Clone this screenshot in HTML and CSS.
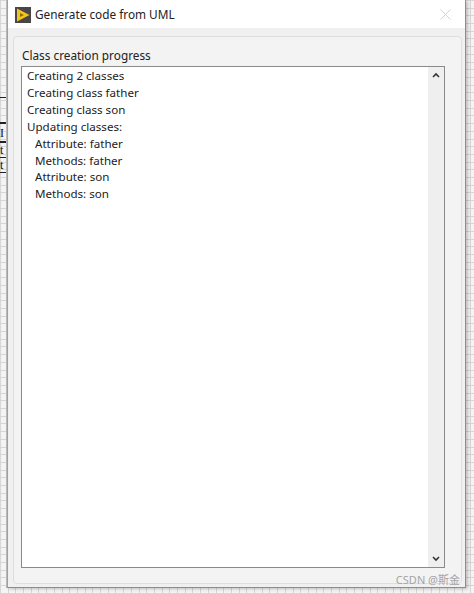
FILE: index.html
```html
<!DOCTYPE html>
<html lang="en">
<head>
<meta charset="utf-8">
<title>Generate code from UML</title>
<link rel="stylesheet" href="styles.css">
</head>
<body>
<div class="canvas">
  <div class="behind">
    <div class="behind-rule"></div>
    <div class="behind-rule thick"></div>
    <div class="behind-text tall">I</div>
    <div class="behind-rule thick"></div>
    <div class="behind-text underlined">t</div>
    <div class="behind-text underlined">t</div>
  </div>
  <main class="window">
    <header class="titlebar">
      <svg class="app-icon" viewBox="0 0 16 16" width="16" height="16" aria-hidden="true">
        <rect width="16" height="16" fill="#4a4648"/>
        <path d="M2 1.5 L14.5 8 L2 14.5 Z" fill="#f5c518"/>
        <path d="M5 6 L9 8 L5 10 Z" fill="#8a6d10"/>
      </svg>
      <span class="title">Generate code from UML</span>
      <svg class="close" viewBox="0 0 11 11" width="11" height="11" aria-hidden="true">
        <path d="M.5.5l10 10M10.5.5l-10 10" stroke="#d2d2d2" stroke-width="1" fill="none"/>
      </svg>
    </header>
    <section class="panel">
      <div class="group">
        <div class="label">Class creation progress</div>
        <div class="listbox">
          <div class="log">
            <div>Creating 2 classes</div>
            <div>Creating class father</div>
            <div>Creating class son</div>
            <div>Updating classes:</div>
            <div class="sub">Attribute: father</div>
            <div class="sub">Methods: father</div>
            <div class="sub">Attribute: son</div>
            <div class="sub">Methods: son</div>
          </div>
          <div class="scrollbar">
            <svg viewBox="0 0 8 6" width="8" height="6" aria-hidden="true"><path d="M1 5l3-3 3 3" stroke="#333" stroke-width="1.6" fill="none"/></svg>
            <svg viewBox="0 0 8 6" width="8" height="6" aria-hidden="true"><path d="M1 1l3 3 3-3" stroke="#333" stroke-width="1.6" fill="none"/></svg>
          </div>
        </div>
      </div>
    </section>
  </main>
  <div class="watermark">CSDN @斯金</div>
</div>
</body>
</html>
```
FILE: styles.css
```css
html, body { margin: 0; padding: 0; }
body { width: 474px; height: 594px; overflow: hidden; font-family: "Noto Sans", "Noto Sans CJK SC", sans-serif; }
.canvas {
  position: relative; width: 474px; height: 594px; box-sizing: border-box; padding-left: 7px;
  background-color: #f4f4f4;
  background-image:
    repeating-linear-gradient(to right, #d6d6d6 0 1px, transparent 1px 7.7px),
    repeating-linear-gradient(to bottom, #d6d6d6 0 1px, transparent 1px 7.7px);
}
.behind { position: absolute; left: 0; top: 97px; width: 7px; color: #111; font: 12px "Liberation Serif", serif; }
.behind-rule { height: 1px; background: #222; margin-bottom: 24px; }
.behind-rule.thick { height: 2px; margin-bottom: 0; }
.behind-text { box-sizing: border-box; line-height: 14px; }
.behind-text.tall { height: 17px; line-height: 18px; }
.behind-text.underlined { height: 15px; border-bottom: 1px solid #222; }
.window {
  position: relative; width: 459px; height: 588px; box-sizing: border-box; background: #f0f0f0;
  border-right: 1px solid #8d8d8d; border-bottom: 1px solid #8d8d8d; border-left: 1px solid #a0a0a0;
  box-shadow: 2px 1px 3px rgba(0, 0, 0, .22), -1px 0 0 #bcbcbc;
  display: flex; flex-direction: column;
}
.titlebar { height: 28px; flex: none; background: #fff; display: flex; align-items: center; padding: 0 14px 0 7px; gap: 4px; }
.app-icon { margin-top: 1px; }
.title { font-size: 11.8px; color: #222; flex: 1; }
.panel { flex: 1; padding: 8px 3px 3px 5px; display: flex; }
.group { flex: 1; border: 1px solid #dedede; border-radius: 4px; background: #f3f3f3; padding: 10px 16px 15px 7px; display: flex; flex-direction: column; }
.label { font-size: 11.8px; color: #222; line-height: 17px; margin-bottom: 2px; padding-left: 1px; }
.listbox { flex: 1; border: 1px solid #8a8a8a; background: #fff; display: flex; }
.log { flex: 1; padding: 1px 5px 0; font-size: 11.6px; line-height: 16.9px; color: #222; }
.sub { padding-left: 8px; }
.scrollbar { width: 16px; background: #efefef; display: flex; flex-direction: column; justify-content: space-between; align-items: center; padding: 5px 0; }
.watermark { position: absolute; right: 14px; bottom: 7px; font-size: 11px; color: #a4a4a4; }
```
